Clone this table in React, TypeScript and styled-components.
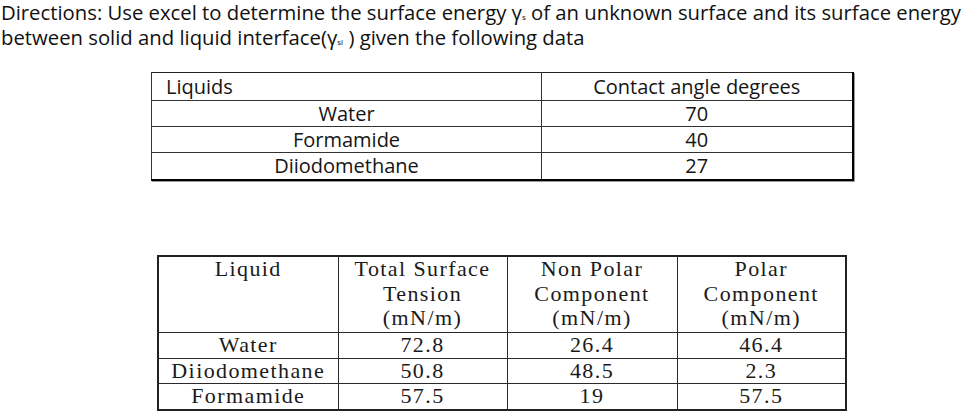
import React from "react";
import styled, { createGlobalStyle } from "styled-components";

const Global = createGlobalStyle`
  html, body { margin: 0; padding: 0; background: #fff; }
`;

const Page = styled.div`
  display: flex;
  flex-direction: column;
  width: 972px;
  padding: 0 0 0 1px;
  box-sizing: border-box;
`;

const Directions = styled.p`
  margin: 0;
  padding-top: 0;
  font-family: "Open Sans", "Liberation Sans", sans-serif;
  font-size: 20.3px;
  font-weight: 500;
  line-height: 25px;
  color: #111;
`;

const Sub = styled.span`
  font-size: 8px;
  line-height: 8px;
  vertical-align: baseline;
`;

const AngleTable = styled.table`
  margin: 22px 0 0 150px;
  border-collapse: collapse;
  width: 701px;
  table-layout: fixed;
  border-top: 1px solid #222;
  border-left: 1px solid #333;
  border-right: 2px solid #000;
  border-bottom: 2px solid #000;
  box-shadow: 1px 1px 0 #999;
  font-family: "Open Sans", "Liberation Sans", sans-serif;
  font-size: 20px;
  font-weight: 500;
  color: #151515;
`;

const ACell = styled.td<{ $align?: string; $h: number; $pl?: number }>`
  height: ${(p) => p.$h}px;
  padding: 0 0 0 ${(p) => p.$pl ?? 0}px;
  text-align: ${(p) => p.$align ?? "center"};
  border-bottom: 1px solid #333;
  line-height: 20px;
  vertical-align: middle;
  &:first-child { border-right: 1px solid #333; }
`;

const DataTable = styled.table`
  margin: 74px 0 0 156px;
  border-collapse: collapse;
  width: 688px;
  table-layout: fixed;
  border: 2px solid #222;
  font-family: "Liberation Serif", "Times New Roman", serif;
  font-size: 22px;
  color: #1a1a1a;
`;

const DCell = styled.td<{ $h?: number; $top?: boolean }>`
  border: 1.5px solid #2a2a2a;
  height: ${(p) => p.$h ?? 24}px;
  padding: 0;
  text-align: center;
  vertical-align: ${(p) => (p.$top ? "top" : "middle")};
  line-height: 24.5px;
  letter-spacing: 1.4px;
`;

const angles = [
  ["Water", "70"],
  ["Formamide", "40"],
  ["Diiodomethane", "27"],
];

const tension = [
  ["Water", "72.8", "26.4", "46.4"],
  ["Diiodomethane", "50.8", "48.5", "2.3"],
  ["Formamide", "57.5", "19", "57.5"],
];

export default function App() {
  return (
    <>
      <Global />
      <Page>
        <Directions>
          Directions: Use excel to determine the surface energy γ<Sub>s</Sub> of an unknown surface and its surface energy
          <br />
          between solid and liquid interface(γ<Sub>sl</Sub> ) given the following data
        </Directions>
        <AngleTable>
          <colgroup>
            <col style={{ width: 390 }} />
            <col style={{ width: 311 }} />
          </colgroup>
          <tbody>
            <tr>
              <ACell $align="left" $pl={14} $h={27}>Liquids</ACell>
              <ACell $h={27}>Contact angle degrees</ACell>
            </tr>
            {angles.map(([l, a], i) => (
              <tr key={l}>
                <ACell $h={i === 2 ? 26 : 25}>{l}</ACell>
                <ACell $h={i === 2 ? 26 : 25}>{a}</ACell>
              </tr>
            ))}
          </tbody>
        </AngleTable>
        <DataTable>
          <colgroup>
            <col style={{ width: 180 }} />
            <col style={{ width: 169 }} />
            <col style={{ width: 170 }} />
            <col style={{ width: 169 }} />
          </colgroup>
          <tbody>
            <tr>
              <DCell $top $h={75}>Liquid</DCell>
              <DCell $top $h={75}>Total Surface<br />Tension<br />(mN/m)</DCell>
              <DCell $top $h={75}>Non Polar<br />Component<br />(mN/m)</DCell>
              <DCell $top $h={75}>Polar<br />Component<br />(mN/m)</DCell>
            </tr>
            {tension.map((r) => (
              <tr key={r[0]}>
                {r.map((c, j) => (
                  <DCell key={j}>{c}</DCell>
                ))}
              </tr>
            ))}
          </tbody>
        </DataTable>
      </Page>
    </>
  );
}
